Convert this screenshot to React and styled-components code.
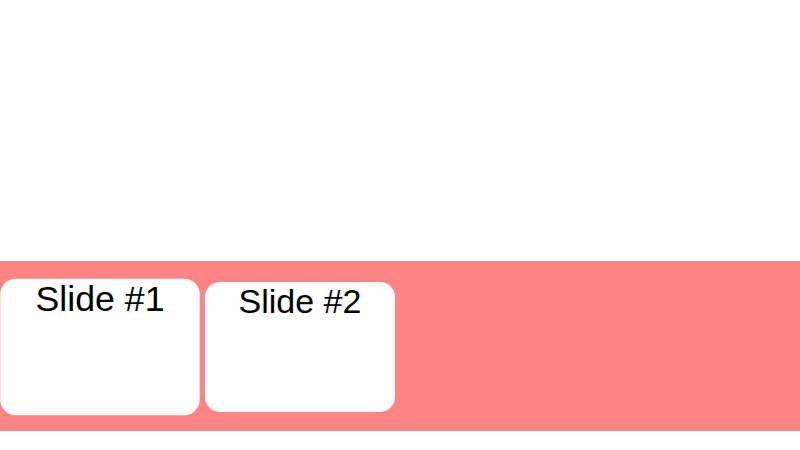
import React from 'react';
import styled, { createGlobalStyle } from 'styled-components';

const GlobalStyle = createGlobalStyle`
  body {
    margin: 0;
    background: #fff;
    font-family: "Liberation Sans", Arial, sans-serif;
  }
`;

const slides = [
  { id: 1, title: 'Slide #1' },
  { id: 2, title: 'Slide #2' },
];

const App = () => {
  const current = 0;

  return (
    <>
      <GlobalStyle />
      <Page>
        <Track>
          {slides.map((slide, i) => (
            <Slide key={slide.id} $active={i === current}>
              {slide.title}
            </Slide>
          ))}
        </Track>
      </Page>
    </>
  );
};

export default App;

const Page = styled.div`
  padding-top: 261px;
`;

const Track = styled.div`
  display: flex;
  gap: 10px;
  height: 170px;
  box-sizing: border-box;
  padding: 21px 5px 19px;
  background: #ff8484;
  overflow: hidden;
`;

const Slide = styled.div`
  flex: 0 0 190px;
  height: 130px;
  background: #fff;
  border-radius: 15px;
  color: #000;
  font-size: 34px;
  text-align: center;
  transform: scale(${(p) => (p.$active ? 1.05 : 1)});
`;
